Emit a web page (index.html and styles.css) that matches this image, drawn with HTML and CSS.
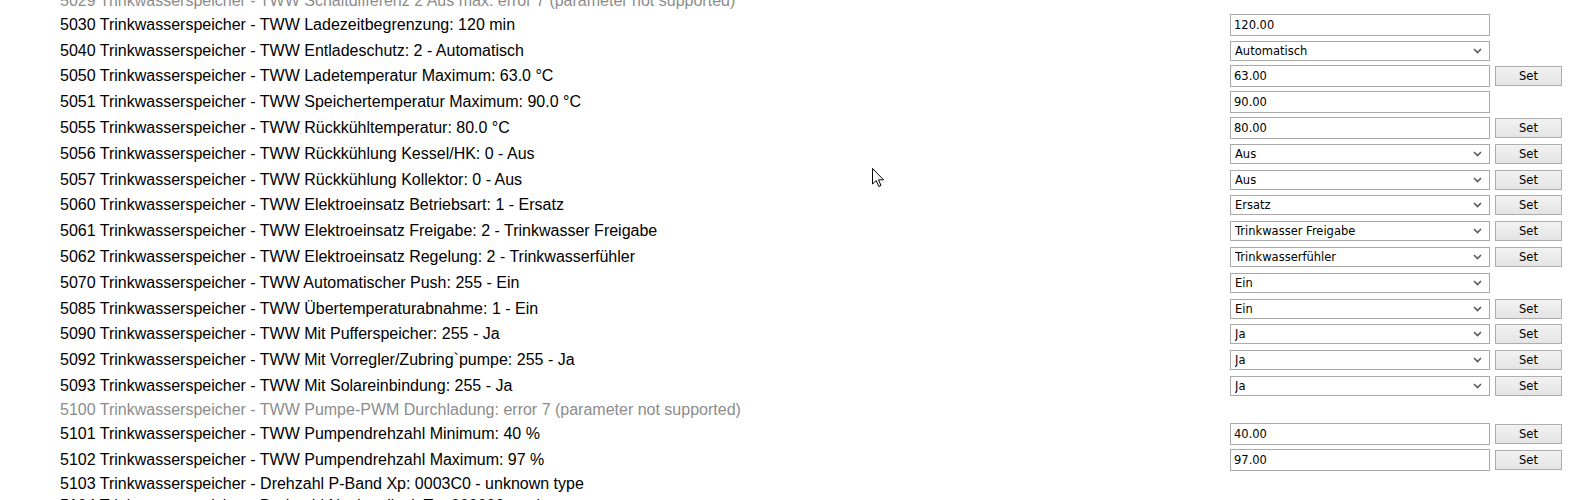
FILE: index.html
```html
<!DOCTYPE html>
<html>
<head>
	<meta charset="utf-8">
	<meta name="viewport" content="width=device-width, initial-scale=1">
	<link rel="stylesheet" href="styles.css">
</head>
<body>
<div class="params">
   <div class="row text-row off">
      <div class="name">5029 Trinkwasserspeicher - TWW Schaltdifferenz 2 Aus max: error 7 (parameter not supported)</div>
   </div>
   <div class="row">
      <div class="name">5030 Trinkwasserspeicher - TWW Ladezeitbegrenzung: 120 min</div>
      <input type="text" class="value" value="120.00">
   </div>
   <div class="row">
      <div class="name">5040 Trinkwasserspeicher - TWW Entladeschutz: 2 - Automatisch</div>
      <div class="pick">
         <select><option>Automatisch</option></select>
         <svg class="arrow" width="9" height="6" viewBox="0 0 9 6"><path d="M1 1 L4.5 4.5 L8 1" fill="none" stroke="#5a5a5a" stroke-width="1.6"/></svg>
      </div>
   </div>
   <div class="row">
      <div class="name">5050 Trinkwasserspeicher - TWW Ladetemperatur Maximum: 63.0 °C</div>
      <input type="text" class="value" value="63.00">
      <button>Set</button>
   </div>
   <div class="row">
      <div class="name">5051 Trinkwasserspeicher - TWW Speichertemperatur Maximum: 90.0 °C</div>
      <input type="text" class="value" value="90.00">
   </div>
   <div class="row">
      <div class="name">5055 Trinkwasserspeicher - TWW Rückkühltemperatur: 80.0 °C</div>
      <input type="text" class="value" value="80.00">
      <button>Set</button>
   </div>
   <div class="row">
      <div class="name">5056 Trinkwasserspeicher - TWW Rückkühlung Kessel/HK: 0 - Aus</div>
      <div class="pick">
         <select><option>Aus</option></select>
         <svg class="arrow" width="9" height="6" viewBox="0 0 9 6"><path d="M1 1 L4.5 4.5 L8 1" fill="none" stroke="#5a5a5a" stroke-width="1.6"/></svg>
      </div>
      <button>Set</button>
   </div>
   <div class="row">
      <div class="name">5057 Trinkwasserspeicher - TWW Rückkühlung Kollektor: 0 - Aus</div>
      <div class="pick">
         <select><option>Aus</option></select>
         <svg class="arrow" width="9" height="6" viewBox="0 0 9 6"><path d="M1 1 L4.5 4.5 L8 1" fill="none" stroke="#5a5a5a" stroke-width="1.6"/></svg>
      </div>
      <button>Set</button>
   </div>
   <div class="row">
      <div class="name">5060 Trinkwasserspeicher - TWW Elektroeinsatz Betriebsart: 1 - Ersatz</div>
      <div class="pick">
         <select><option>Ersatz</option></select>
         <svg class="arrow" width="9" height="6" viewBox="0 0 9 6"><path d="M1 1 L4.5 4.5 L8 1" fill="none" stroke="#5a5a5a" stroke-width="1.6"/></svg>
      </div>
      <button>Set</button>
   </div>
   <div class="row">
      <div class="name">5061 Trinkwasserspeicher - TWW Elektroeinsatz Freigabe: 2 - Trinkwasser Freigabe</div>
      <div class="pick">
         <select><option>Trinkwasser Freigabe</option></select>
         <svg class="arrow" width="9" height="6" viewBox="0 0 9 6"><path d="M1 1 L4.5 4.5 L8 1" fill="none" stroke="#5a5a5a" stroke-width="1.6"/></svg>
      </div>
      <button>Set</button>
   </div>
   <div class="row">
      <div class="name">5062 Trinkwasserspeicher - TWW Elektroeinsatz Regelung: 2 - Trinkwasserfühler</div>
      <div class="pick">
         <select><option>Trinkwasserfühler</option></select>
         <svg class="arrow" width="9" height="6" viewBox="0 0 9 6"><path d="M1 1 L4.5 4.5 L8 1" fill="none" stroke="#5a5a5a" stroke-width="1.6"/></svg>
      </div>
      <button>Set</button>
   </div>
   <div class="row">
      <div class="name">5070 Trinkwasserspeicher - TWW Automatischer Push: 255 - Ein</div>
      <div class="pick">
         <select><option>Ein</option></select>
         <svg class="arrow" width="9" height="6" viewBox="0 0 9 6"><path d="M1 1 L4.5 4.5 L8 1" fill="none" stroke="#5a5a5a" stroke-width="1.6"/></svg>
      </div>
   </div>
   <div class="row">
      <div class="name">5085 Trinkwasserspeicher - TWW Übertemperaturabnahme: 1 - Ein</div>
      <div class="pick">
         <select><option>Ein</option></select>
         <svg class="arrow" width="9" height="6" viewBox="0 0 9 6"><path d="M1 1 L4.5 4.5 L8 1" fill="none" stroke="#5a5a5a" stroke-width="1.6"/></svg>
      </div>
      <button>Set</button>
   </div>
   <div class="row">
      <div class="name">5090 Trinkwasserspeicher - TWW Mit Pufferspeicher: 255 - Ja</div>
      <div class="pick">
         <select><option>Ja</option></select>
         <svg class="arrow" width="9" height="6" viewBox="0 0 9 6"><path d="M1 1 L4.5 4.5 L8 1" fill="none" stroke="#5a5a5a" stroke-width="1.6"/></svg>
      </div>
      <button>Set</button>
   </div>
   <div class="row">
      <div class="name">5092 Trinkwasserspeicher - TWW Mit Vorregler/Zubring`pumpe: 255 - Ja</div>
      <div class="pick">
         <select><option>Ja</option></select>
         <svg class="arrow" width="9" height="6" viewBox="0 0 9 6"><path d="M1 1 L4.5 4.5 L8 1" fill="none" stroke="#5a5a5a" stroke-width="1.6"/></svg>
      </div>
      <button>Set</button>
   </div>
   <div class="row">
      <div class="name">5093 Trinkwasserspeicher - TWW Mit Solareinbindung: 255 - Ja</div>
      <div class="pick">
         <select><option>Ja</option></select>
         <svg class="arrow" width="9" height="6" viewBox="0 0 9 6"><path d="M1 1 L4.5 4.5 L8 1" fill="none" stroke="#5a5a5a" stroke-width="1.6"/></svg>
      </div>
      <button>Set</button>
   </div>
   <div class="row text-row off">
      <div class="name">5100 Trinkwasserspeicher - TWW Pumpe-PWM Durchladung: error 7 (parameter not supported)</div>
   </div>
   <div class="row">
      <div class="name">5101 Trinkwasserspeicher - TWW Pumpendrehzahl Minimum: 40 %</div>
      <input type="text" class="value" value="40.00">
      <button>Set</button>
   </div>
   <div class="row">
      <div class="name">5102 Trinkwasserspeicher - TWW Pumpendrehzahl Maximum: 97 %</div>
      <input type="text" class="value" value="97.00">
      <button>Set</button>
   </div>
   <div class="row text-row">
      <div class="name">5103 Trinkwasserspeicher - Drehzahl P-Band Xp: 0003C0 - unknown type</div>
   </div>
   <div class="row text-row">
      <div class="name">5104 Trinkwasserspeicher - Drehzahl Nachstellzeit Tn: 000000 - unknown type</div>
   </div>
</div>
<svg class="cursor" width="13" height="20" viewBox="0 0 13 20"><path d="M0.5 0.5 L0.5 16 L4.2 12.5 L6.8 18.5 L9 17.5 L6.5 11.8 L11.5 11.8 Z" fill="#fff" stroke="#000" stroke-width="1" stroke-linejoin="round"/></svg>
</body>
</html>
```

FILE: styles.css
```css
body {
   margin: 0;
   background: #fff;
   color: #000;
   font-family: "Liberation Sans", Arial, sans-serif;
   font-size: 16px;
   overflow: hidden;
   height: 500px;
   position: relative;
}

/* page is scrolled a little, first row is cut off */
.params {
   margin-top: -10px;
   padding: 0 25px 0 60px;
}

.row {
   display: grid;
   grid-template-columns: 1fr 260px 67px;
   column-gap: 5px;
   align-items: center;
   height: 25.8px;
}

.row.text-row {
   height: 22px;
}

.name {
   line-height: 20px;
   white-space: nowrap;
}

.off .name {
   color: #8c8c8c;
}

input,
select,
button {
   font-family: "DejaVu Sans", Tahoma, sans-serif;
   font-size: 11.5px;
   color: #000;
   box-sizing: border-box;
   margin: 0;
}

.value {
   grid-column: 2;
   width: 260px;
   height: 22px;
   padding: 0 3px;
   border: 1px solid #a9a9a9;
   background: #fff;
   outline: none;
}

.pick {
   grid-column: 2;
   position: relative;
   height: 20px;
}

.pick select {
   -webkit-appearance: none;
   appearance: none;
   width: 260px;
   height: 20px;
   padding: 0 20px 0 4px;
   border: 1px solid #a9a9a9;
   border-radius: 0;
   background: #fff;
   outline: none;
}

.pick .arrow {
   position: absolute;
   right: 8px;
   top: 7px;
   pointer-events: none;
}

button {
   grid-column: 3;
   width: 67px;
   height: 20px;
   padding: 0;
   border: 1px solid #adadad;
   background: linear-gradient(#f2f2f2, #e4e4e4);
   cursor: pointer;
}

.cursor {
   position: absolute;
   left: 872px;
   top: 168px;
   pointer-events: none;
}
```
